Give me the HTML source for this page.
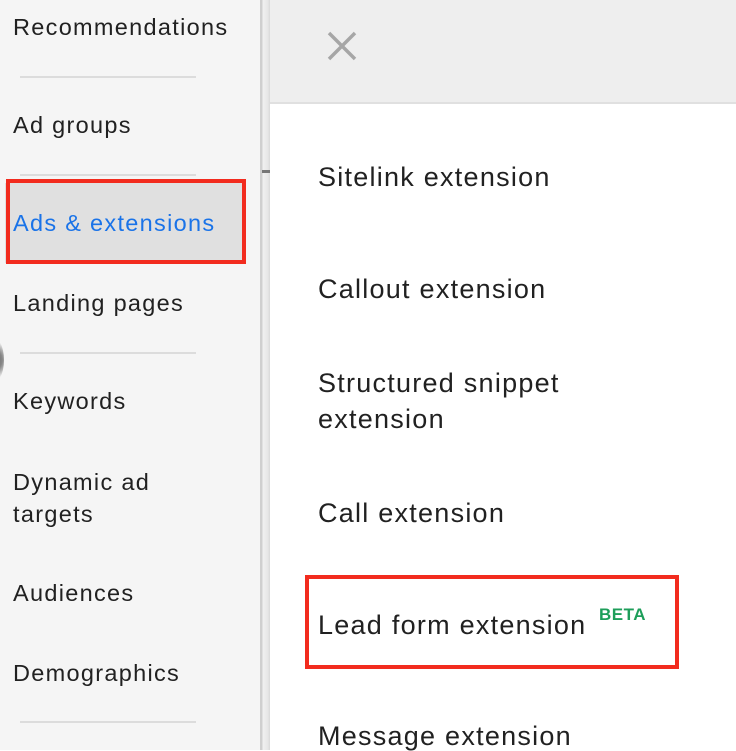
<!DOCTYPE html>
<html><head><meta charset="utf-8"><style>
body{margin:0;width:736px;height:750px;overflow:hidden;position:relative;background:#fff;font-family:"Liberation Sans",sans-serif;}
.side{position:absolute;left:0;top:0;width:260px;height:750px;background:#f5f5f5;}
.strip{position:absolute;left:260px;top:0;width:10px;height:750px;background:linear-gradient(90deg,#cfcfcf 0,#cfcfcf 2px,#f0f0f0 3px,#e6e6e6 8px,#d8d8d8 10px);}
.t{position:absolute;line-height:1;white-space:nowrap;color:#212121;}
.l{left:13px;font-size:23.5px;letter-spacing:1.3px;}
.r{left:318px;font-size:27px;letter-spacing:1.25px;}
.div{position:absolute;left:20px;width:176px;height:2px;background:#dcdcdc;}
.hdr{position:absolute;left:270px;top:0;width:466px;height:102px;background:#eeeeee;border-bottom:2px solid #e0e0e0;}
.box{position:absolute;border:4px solid #f22b1e;box-sizing:border-box;}
</style></head><body>
<div class="side"></div>
<div style="position:absolute;left:5px;top:183px;width:240px;height:80px;background:#e0e0e0"></div>
<div style="position:absolute;left:-22px;top:335px;width:26px;height:50px;border-radius:50%;background:radial-gradient(circle,#555 0,#888 40%,rgba(200,200,200,0) 70%)"></div>
<div class="strip"></div>
<div style="position:absolute;left:262px;top:170px;width:8px;height:3px;background:#777"></div>
<div class="hdr"></div>
<svg style="position:absolute;left:326px;top:30px" width="32" height="32"><path d="M3 3L29 29M29 3L3 29" stroke="#a6a6a6" stroke-width="3.5"/></svg>

<div class="t l" style="top:16px">Recommendations</div>
<div class="div" style="top:76px"></div>
<div class="t l" style="top:114px">Ad groups</div>
<div class="div" style="top:174px"></div>
<div class="t l" style="top:212px;color:#1a73e8">Ads &amp; extensions</div>
<div class="box" style="left:6px;top:179px;width:240px;height:85px"></div>
<div class="t l" style="top:292px">Landing pages</div>
<div class="div" style="top:352px"></div>
<div class="t l" style="top:390px">Keywords</div>
<div class="t l" style="top:471px">Dynamic ad</div>
<div class="t l" style="top:503px">targets</div>
<div class="t l" style="top:582px">Audiences</div>
<div class="t l" style="top:662px">Demographics</div>
<div class="div" style="top:721px"></div>

<div class="t r" style="top:164px">Sitelink extension</div>
<div class="t r" style="top:276px">Callout extension</div>
<div class="t r" style="top:370px">Structured snippet</div>
<div class="t r" style="top:406px">extension</div>
<div class="t r" style="top:500px">Call extension</div>
<div class="t r" style="top:612px">Lead form extension</div>
<div class="t" style="left:599px;top:606px;font-size:17px;font-weight:bold;color:#1e9e5a;letter-spacing:0.5px">BETA</div>
<div class="box" style="left:305px;top:575px;width:374px;height:94px"></div>
<div class="t r" style="top:723px">Message extension</div>
</body></html>
